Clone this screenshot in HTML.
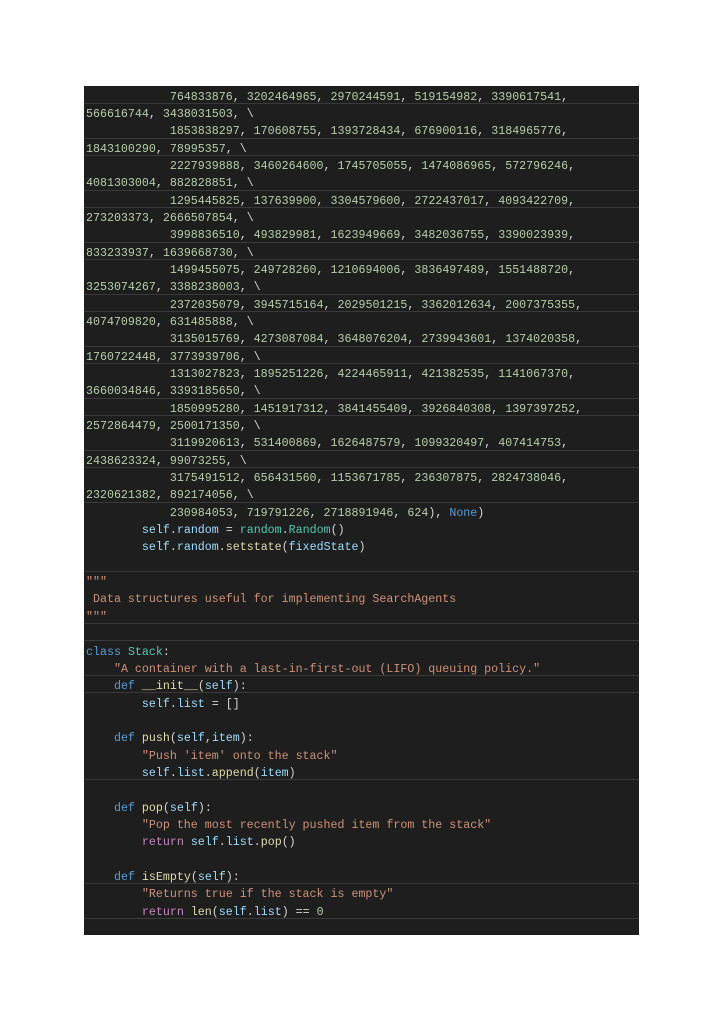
<!DOCTYPE html>
<html><head><meta charset="utf-8"><style>
html,body{margin:0;padding:0;background:#fff;width:724px;height:1024px;overflow:hidden}
#box{position:absolute;left:84px;top:86px;width:555px;height:849px;background:#1e1e1e;overflow:hidden}
pre{position:absolute;left:2px;top:2.5px;margin:0;font-family:"Liberation Mono",monospace;font-size:11.65px;line-height:17.34px;color:#d4d4d4;white-space:pre}
.n{color:#b5cea8}.s{color:#9cdcfe}.k{color:#569cd6}.c{color:#4ec9b0}.q{color:#ce9178}.r{color:#c586c0}.f{color:#dcdcaa}
.sep{position:absolute;left:0;width:555px;height:1px;background:#3a3a3a}
</style></head><body>
<div id="box">
<div class="sep" style="top:17px"></div>
<div class="sep" style="top:52px"></div>
<div class="sep" style="top:69px"></div>
<div class="sep" style="top:104px"></div>
<div class="sep" style="top:121px"></div>
<div class="sep" style="top:156px"></div>
<div class="sep" style="top:173px"></div>
<div class="sep" style="top:208px"></div>
<div class="sep" style="top:225px"></div>
<div class="sep" style="top:260px"></div>
<div class="sep" style="top:277px"></div>
<div class="sep" style="top:312px"></div>
<div class="sep" style="top:329px"></div>
<div class="sep" style="top:364px"></div>
<div class="sep" style="top:381px"></div>
<div class="sep" style="top:416px"></div>
<div class="sep" style="top:485px"></div>
<div class="sep" style="top:537px"></div>
<div class="sep" style="top:554px"></div>
<div class="sep" style="top:589px"></div>
<div class="sep" style="top:606px"></div>
<div class="sep" style="top:693px"></div>
<div class="sep" style="top:797px"></div>
<div class="sep" style="top:832px"></div>
<pre>            <span class="n">764833876</span>, <span class="n">3202464965</span>, <span class="n">2970244591</span>, <span class="n">519154982</span>, <span class="n">3390617541</span>,
<span class="n">566616744</span>, <span class="n">3438031503</span>, \
            <span class="n">1853838297</span>, <span class="n">170608755</span>, <span class="n">1393728434</span>, <span class="n">676900116</span>, <span class="n">3184965776</span>,
<span class="n">1843100290</span>, <span class="n">78995357</span>, \
            <span class="n">2227939888</span>, <span class="n">3460264600</span>, <span class="n">1745705055</span>, <span class="n">1474086965</span>, <span class="n">572796246</span>,
<span class="n">4081303004</span>, <span class="n">882828851</span>, \
            <span class="n">1295445825</span>, <span class="n">137639900</span>, <span class="n">3304579600</span>, <span class="n">2722437017</span>, <span class="n">4093422709</span>,
<span class="n">273203373</span>, <span class="n">2666507854</span>, \
            <span class="n">3998836510</span>, <span class="n">493829981</span>, <span class="n">1623949669</span>, <span class="n">3482036755</span>, <span class="n">3390023939</span>,
<span class="n">833233937</span>, <span class="n">1639668730</span>, \
            <span class="n">1499455075</span>, <span class="n">249728260</span>, <span class="n">1210694006</span>, <span class="n">3836497489</span>, <span class="n">1551488720</span>,
<span class="n">3253074267</span>, <span class="n">3388238003</span>, \
            <span class="n">2372035079</span>, <span class="n">3945715164</span>, <span class="n">2029501215</span>, <span class="n">3362012634</span>, <span class="n">2007375355</span>,
<span class="n">4074709820</span>, <span class="n">631485888</span>, \
            <span class="n">3135015769</span>, <span class="n">4273087084</span>, <span class="n">3648076204</span>, <span class="n">2739943601</span>, <span class="n">1374020358</span>,
<span class="n">1760722448</span>, <span class="n">3773939706</span>, \
            <span class="n">1313027823</span>, <span class="n">1895251226</span>, <span class="n">4224465911</span>, <span class="n">421382535</span>, <span class="n">1141067370</span>,
<span class="n">3660034846</span>, <span class="n">3393185650</span>, \
            <span class="n">1850995280</span>, <span class="n">1451917312</span>, <span class="n">3841455409</span>, <span class="n">3926840308</span>, <span class="n">1397397252</span>,
<span class="n">2572864479</span>, <span class="n">2500171350</span>, \
            <span class="n">3119920613</span>, <span class="n">531400869</span>, <span class="n">1626487579</span>, <span class="n">1099320497</span>, <span class="n">407414753</span>,
<span class="n">2438623324</span>, <span class="n">99073255</span>, \
            <span class="n">3175491512</span>, <span class="n">656431560</span>, <span class="n">1153671785</span>, <span class="n">236307875</span>, <span class="n">2824738046</span>,
<span class="n">2320621382</span>, <span class="n">892174056</span>, \
            <span class="n">230984053</span>, <span class="n">719791226</span>, <span class="n">2718891946</span>, <span class="n">624</span>), <span class="k">None</span>)
        <span class="s">self</span>.<span class="s">random</span> = <span class="c">random</span>.<span class="c">Random</span>()
        <span class="s">self</span>.<span class="s">random</span>.<span class="f">setstate</span>(<span class="s">fixedState</span>)

<span class="q">"""</span>
<span class="q"> Data structures useful for implementing SearchAgents</span>
<span class="q">"""</span>

<span class="k">class</span> <span class="c">Stack</span>:
    <span class="q">"A container with a last-in-first-out (LIFO) queuing policy."</span>
    <span class="k">def</span> <span class="f">__init__</span>(<span class="s">self</span>):
        <span class="s">self</span>.<span class="s">list</span> = []

    <span class="k">def</span> <span class="f">push</span>(<span class="s">self</span>,<span class="s">item</span>):
        <span class="q">"Push 'item' onto the stack"</span>
        <span class="s">self</span>.<span class="s">list</span>.<span class="f">append</span>(<span class="s">item</span>)

    <span class="k">def</span> <span class="f">pop</span>(<span class="s">self</span>):
        <span class="q">"Pop the most recently pushed item from the stack"</span>
        <span class="r">return</span> <span class="s">self</span>.<span class="s">list</span>.<span class="f">pop</span>()

    <span class="k">def</span> <span class="f">isEmpty</span>(<span class="s">self</span>):
        <span class="q">"Returns true if the stack is empty"</span>
        <span class="r">return</span> <span class="f">len</span>(<span class="s">self</span>.<span class="s">list</span>) == <span class="n">0</span>
</pre>
</div>
</body></html>
